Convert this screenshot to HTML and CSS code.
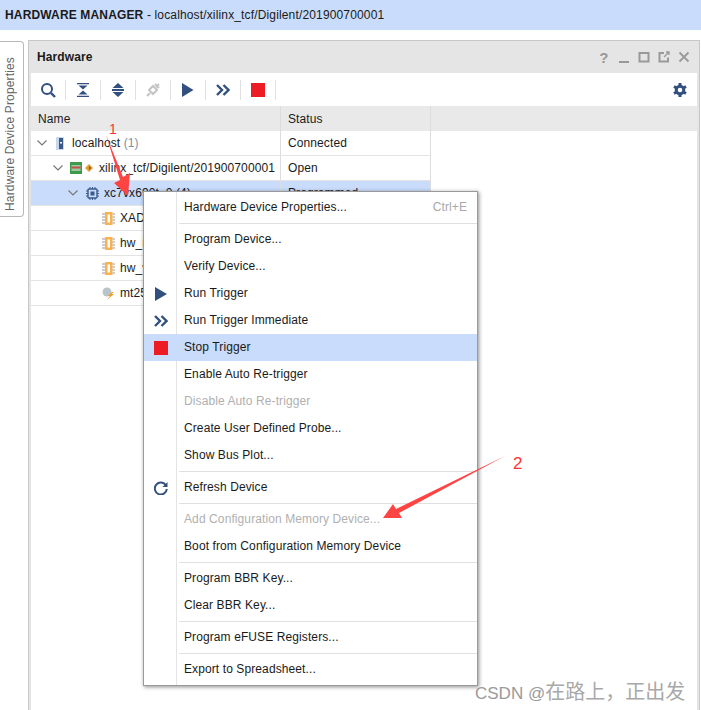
FILE: index.html
```html
<!DOCTYPE html>
<html lang="en">
<head>
<meta charset="utf-8">
<title>Hardware Manager</title>
<link rel="stylesheet" href="styles.css">
</head>
<body>
<header class="topbar"><b>HARDWARE MANAGER</b> - localhost/xilinx_tcf/Digilent/201900700001</header>
<main class="workspace">
  <aside class="sidetab"><span>Hardware Device Properties</span></aside>
  <section class="panel">
    <div class="panel-title">
      <b>Hardware</b>
      <div class="win-icons">
        <span class="q">?</span>
        <svg width="12" height="12" viewBox="0 0 12 12"><path d="M1 11h10" stroke="#999" stroke-width="2"/></svg>
        <svg width="12" height="12" viewBox="0 0 12 12"><rect x="1.500" y="2" width="9" height="8.500" fill="none" stroke="#999" stroke-width="2"/></svg>
        <svg width="12" height="12" viewBox="0 0 12 12"><path d="M6 2H1.500v8.500H10V6.500" fill="none" stroke="#999" stroke-width="2"/><path d="M6 6l5-5M8 1h3v3" fill="none" stroke="#999" stroke-width="1.300"/></svg>
        <svg width="12" height="12" viewBox="0 0 12 12"><path d="M1.500 1.500l9 9M10.500 1.500l-9 9" stroke="#999" stroke-width="1.800"/></svg>
      </div>
    </div>
    <div class="panel-body">
      <div class="toolbar">
        <span class="tool"><svg width="16" height="16" viewBox="0 0 16 16"><circle cx="7" cy="7" r="5" fill="none" stroke="#32507f" stroke-width="2"/><path d="M11 11l4 4" stroke="#32507f" stroke-width="2.400"/></svg></span>
        <span class="tool"><svg width="14" height="14" viewBox="0 0 14 14"><path d="M1 0h12v1.300H1zM1 12.700h12V14H1zM2.500 2.500h9L7 6.500zM2.500 11.500h9L7 7.500z" fill="#32507f"/></svg></span>
        <span class="tool"><svg width="14" height="14" viewBox="0 0 14 14"><path d="M1 6h12v2H1zM7 0l5.500 5h-11zM7 14l-5.500-5h11z" fill="#32507f"/></svg></span>
        <span class="tool"><svg width="14" height="14" viewBox="0 0 14 14"><path d="M3 7l4-4 4 4-4 4zM1 13l3-3M10 4l3-3M9 1l4 4" fill="none" stroke="#c4c4c4" stroke-width="2"/></svg></span>
        <span class="tool"><svg width="12" height="14" viewBox="0 0 12 14"><path d="M0 0l11.500 7L0 14z" fill="#32507f"/></svg></span>
        <span class="tool"><svg width="14" height="12" viewBox="0 0 14 12"><path d="M1 1l5 5-5 5M7.500 1l5 5-5 5" fill="none" stroke="#32507f" stroke-width="2.400"/></svg></span>
        <span class="tool"><i class="stop"></i></span>
        <svg class="gear" width="14" height="14" viewBox="0 0 14 14"><circle cx="7" cy="7" r="3.800" fill="none" stroke="#32507f" stroke-width="3"/><path d="M7 0v3M7 11v3M1 3.500l2.600 1.500M10.400 9l2.600 1.500M1 10.500L3.600 9M10.400 5L13 3.500" stroke="#32507f" stroke-width="3"/></svg>
      </div>
      <div class="grid-head">
        <div class="c1">Name</div><div class="c2">Status</div><div class="c3"></div>
      </div>
      <div class="row">
        <div class="c1 i1">
          <svg class="chev" width="10" height="6" viewBox="0 0 10 6"><path d="M.5.500L5 5 9.500.500" fill="none" stroke="#777" stroke-width="1.200"/></svg>
          <svg class="ico" width="8" height="13" viewBox="0 0 8 13"><rect x="0" y="0" width="8" height="13" rx="1" fill="#c8d8ec"/><rect x="3" y="1" width="4" height="11" fill="#3a5a8a"/><rect x="4" y="5" width="2" height="1.500" fill="#fff"/></svg>
          <span>localhost <em>(1)</em></span>
        </div>
        <div class="c2">Connected</div>
      </div>
      <div class="row">
        <div class="c1 i2">
          <svg class="chev" width="10" height="6" viewBox="0 0 10 6"><path d="M.5.500L5 5 9.500.500" fill="none" stroke="#777" stroke-width="1.200"/></svg>
          <svg class="ico" width="12" height="12" viewBox="0 0 12 12"><rect width="12" height="12" fill="#3c9a4a"/><rect x="1.500" y="3" width="9" height="6" fill="#9cc8a0"/><rect x="1.500" y="4.500" width="9" height="2" fill="#c0504a"/></svg>
          <svg class="ico2" width="8" height="8" viewBox="0 0 8 8"><path d="M4 0l4 4-4 4-4-4z" fill="#e0a030"/><path d="M4 2l2 2-2 2z" fill="#555"/></svg>
          <span>xilinx_tcf/Digilent/201900700001</span>
        </div>
        <div class="c2">Open</div>
      </div>
      <div class="row selected">
        <div class="c1 i3">
          <svg class="chev" width="10" height="6" viewBox="0 0 10 6"><path d="M.5.500L5 5 9.500.500" fill="none" stroke="#777" stroke-width="1.200"/></svg>
          <svg class="ico" width="13" height="13" viewBox="0 0 13 13"><rect x="2" y="2" width="9" height="9" rx="1" fill="none" stroke="#3a5a8a" stroke-width="1.400"/><rect x="4.500" y="4.500" width="4" height="4" fill="#3a5a8a"/><path d="M4 0v2M6.500 0v2M9 0v2M4 11v2M6.500 11v2M9 11v2M0 4h2M0 6.500h2M0 9h2M11 4h2M11 6.500h2M11 9h2" stroke="#3a5a8a"/></svg>
          <span>xc7vx690t_0 (4)</span>
        </div>
        <div class="c2">Programmed</div>
      </div>
      <div class="row">
        <div class="c1 i4">
          <svg class="ico" width="13" height="13" viewBox="0 0 13 13"><rect x="3" y="0" width="7.500" height="13" fill="#fbb24e"/><path d="M5.500 2.500h2.500v8H5.500z" fill="#fff"/><path d="M0 2h3M0 5h3M0 8h3M0 11h3M10.500 2H13M10.500 5H13M10.500 8H13M10.500 11H13" stroke="#999"/></svg>
          <span>XADC</span>
        </div>
        <div class="c2"></div>
      </div>
      <div class="row">
        <div class="c1 i4">
          <svg class="ico" width="13" height="13" viewBox="0 0 13 13"><rect x="3" y="0" width="7.500" height="13" fill="#fbb24e"/><path d="M5.500 2.500h2.500v8H5.500z" fill="#fff"/><path d="M0 2h3M0 5h3M0 8h3M0 11h3M10.500 2H13M10.500 5H13M10.500 8H13M10.500 11H13" stroke="#999"/></svg>
          <span>hw_ila_1</span>
        </div>
        <div class="c2"></div>
      </div>
      <div class="row">
        <div class="c1 i4">
          <svg class="ico" width="13" height="13" viewBox="0 0 13 13"><rect x="3" y="0" width="7.500" height="13" fill="#fbb24e"/><path d="M5.500 2.500h2.500v8H5.500z" fill="#fff"/><path d="M0 2h3M0 5h3M0 8h3M0 11h3M10.500 2H13M10.500 5H13M10.500 8H13M10.500 11H13" stroke="#999"/></svg>
          <span>hw_vio_1</span>
        </div>
        <div class="c2"></div>
      </div>
      <div class="row">
        <div class="c1 i4">
          <svg class="ico" width="13" height="13" viewBox="0 0 13 13"><circle cx="5" cy="5" r="4.500" fill="#b8c4c8"/><path d="M10 5L6 9h2l-3 4 7-6H9.500L12 5z" fill="#f0a020"/></svg>
          <span>mt25qh</span>
        </div>
        <div class="c2"></div>
      </div>
    </div>
  </section>
</main>

<nav class="menu">
  <div class="mi"><span>Hardware Device Properties...</span><kbd>Ctrl+E</kbd></div>
  <hr>
  <div class="mi"><span>Program Device...</span></div>
  <div class="mi"><span>Verify Device...</span></div>
  <div class="mi"><svg class="mico" width="14" height="14" viewBox="0 0 14 14"><path d="M1 0l12 7L1 14z" fill="#32507f"/></svg><span>Run Trigger</span></div>
  <div class="mi"><svg class="mico" width="14" height="12" viewBox="0 0 14 12"><path d="M1 1l5 5-5 5M7.500 1l5 5-5 5" fill="none" stroke="#32507f" stroke-width="2.400"/></svg><span>Run Trigger Immediate</span></div>
  <div class="mi on"><i class="stop mico"></i><span>Stop Trigger</span></div>
  <div class="mi"><span>Enable Auto Re-trigger</span></div>
  <div class="mi off"><span>Disable Auto Re-trigger</span></div>
  <div class="mi"><span>Create User Defined Probe...</span></div>
  <div class="mi"><span>Show Bus Plot...</span></div>
  <hr>
  <div class="mi"><svg class="mico" width="14" height="14" viewBox="0 0 14 14"><path d="M12 4.500A6 6 0 1 0 12.800 8" fill="none" stroke="#32507f" stroke-width="2"/><path d="M13.500 1v5h-5z" fill="#32507f"/></svg><span>Refresh Device</span></div>
  <hr>
  <div class="mi off"><span>Add Configuration Memory Device...</span></div>
  <div class="mi"><span>Boot from Configuration Memory Device</span></div>
  <hr>
  <div class="mi"><span>Program BBR Key...</span></div>
  <div class="mi"><span>Clear BBR Key...</span></div>
  <hr>
  <div class="mi"><span>Program eFUSE Registers...</span></div>
  <hr>
  <div class="mi"><span>Export to Spreadsheet...</span></div>
</nav>

<svg class="marks" width="701" height="710" viewBox="0 0 701 710">
  <path d="M106 135L123 177L130 173L128 196L114 183L120 180Z" fill="#f44"/>
  <path d="M505 456L396 509L393 504L383 518L402 518L399 513Z" fill="#f44"/>
</svg>
<span class="num n1">1</span>
<span class="num n2">2</span>
<div class="wm">CSDN @<span>在路上，正出发</span></div>
</body>
</html>
```
FILE: styles.css
```css
* { box-sizing: border-box; }
html, body { margin: 0; height: 710px; overflow: hidden; background: #fff; }
body { font: 12px "Liberation Sans", Arial, sans-serif; letter-spacing: .1px; color: #1a1a1a; position: relative; }
.topbar { height: 30px; background: #c9dcfb; padding: 8px 5px 0; line-height: 14px; letter-spacing: .15px; }
.workspace { display: flex; height: 680px; padding-top: 10px; }
.sidetab { width: 24px; height: 176px; margin-top: 1px; padding: 9px 4px 0 0; border: 1px solid #b8b8b8; border-left: 0; border-radius: 0 4px 4px 0; display: flex; align-items: center; justify-content: center; }
.sidetab span { writing-mode: vertical-rl; transform: rotate(180deg); color: #666; white-space: nowrap; letter-spacing: .15px; }
.panel { margin-left: 4px; width: 672px; height: 670px; border: 1px solid #c8c8c8; border-bottom: 0; background: #fff; display: flex; flex-direction: column; }
.panel-title { height: 32px; flex: none; background: #e5e5e5; display: flex; align-items: center; justify-content: space-between; padding: 0 9px 0 8px; }
.win-icons { display: flex; align-items: center; gap: 8px; }
.win-icons .q { font-size: 15px; font-weight: 700; color: #999; width: 12px; text-align: center; }
.panel-body { flex: 1; border-left: 2px solid #e5e5e5; border-right: 2px solid #e5e5e5; }
.toolbar { height: 33px; display: flex; align-items: center; }
.tool { width: 35px; height: 20px; display: flex; align-items: center; justify-content: center; border-right: 1px solid #e0e0e0; }
.stop { display: block; width: 14px; height: 14px; background: #ed1c24; }
.gear { margin-left: auto; margin-right: 10px; }
.grid-head { height: 25px; background: #e9e9e9; display: flex; line-height: 26px; }
.c1 { width: 250px; flex: none; display: flex; align-items: center; border-right: 1px solid #dcdcdc; white-space: nowrap; }
.c2 { width: 150px; flex: none; padding-left: 7px; border-right: 1px solid #dcdcdc; line-height: 24px; }
.grid-head .c1 { padding-left: 7px; }
.grid-head .c2 { line-height: 26px; }
.row { height: 25px; display: flex; border-bottom: 1px solid #e4e4e4; width: 400px; }
.row.selected { background: #c9dcfb; }
.i1 { padding-left: 6px; }
.i2 { padding-left: 22px; }
.i3 { padding-left: 37px; }
.i4 { padding-left: 71px; }
.chev { margin-right: 8px; }
.i1 .chev { margin-right: 9px; }
.i2 .chev { margin-right: 7px; }
.i1 .ico { margin-right: 8px; }
.i2 .ico { margin-right: 3px; }
.ico2 { margin-right: 6px; }
.i3 .ico { margin-right: 5px; }
.i4 .ico { margin-right: 5px; }
em { font-style: normal; color: #8090a0; }
.menu { position: absolute; left: 143px; top: 191px; width: 335px; height: 495px; background: #fff; border: 1px solid #9a9a9a; box-shadow: 1px 1px 4px rgba(0,0,0,.45); padding-top: 2px; }
.menu::before { content: ""; position: absolute; left: 32px; top: 0; bottom: 0; width: 1px; background: #e4e4e4; }
.mi { height: 27px; display: flex; align-items: center; padding: 0 10px 1px 40px; position: relative; }
.mi span { flex: 1; }
.mi kbd { font: inherit; color: #a8a8a8; }
.mi.on { background: #c9dcfb; }
.mi.off { color: #b0b0b0; }
.mico { position: absolute; left: 10px; top: 50%; transform: translateY(-50%); }
hr { height: 1px; margin: 2px 0 2px 35px; border: 0; background: #e0e0e0; }
.marks { position: absolute; left: 0; top: 0; pointer-events: none; }
.num { position: absolute; color: #f33; line-height: 1; }
.n1 { left: 109px; top: 122px; font-size: 14px; }
.n2 { left: 513px; top: 455px; font-size: 17px; }
.wm { position: absolute; left: 475px; top: 676px; font: 17px "Liberation Sans", "Noto Sans CJK SC", sans-serif; letter-spacing: 0; color: #9a9a9a; white-space: nowrap; }
.wm span { font-size: 20px; color: #a8a8a8; }
```
